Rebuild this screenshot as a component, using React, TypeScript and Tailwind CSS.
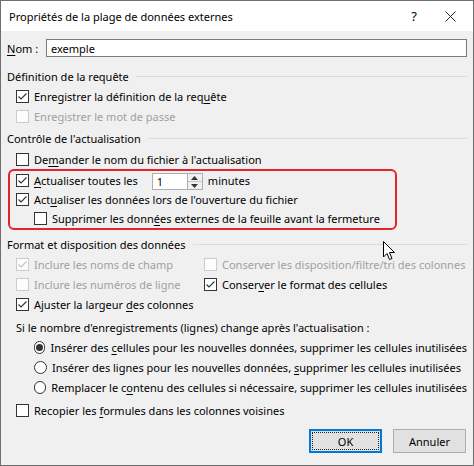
import React from 'react';

const font = { fontFamily: '"Noto Sans", "Liberation Sans", sans-serif' };

const Box: React.FC<{ checked?: boolean; disabled?: boolean }> = ({ checked, disabled }) => (
  <span
    className={`relative block w-[13px] h-[13px] shrink-0 border ${
      disabled ? 'border-[#cccccc] bg-[#fcfcfc]' : 'border-[#333333] bg-white'
    }`}
  >
    {checked && (
      <svg className="absolute left-0 top-0" width="11" height="11" viewBox="0 0 11 11">
        <path
          d="M1.5 5.5 L4 8 L9.5 2.5"
          fill="none"
          stroke={disabled ? '#c4c4c4' : '#333333'}
          strokeWidth="1.1"
        />
      </svg>
    )}
  </span>
);

const Check: React.FC<{
  label: React.ReactNode;
  checked?: boolean;
  disabled?: boolean;
  className?: string;
}> = ({ label, checked, disabled, className = '' }) => (
  <div className={`flex items-center h-5 gap-[5px] ${className}`}>
    <Box checked={checked} disabled={disabled} />
    <span className={`leading-none whitespace-nowrap ${disabled ? 'text-[#a0a0a0]' : 'text-black'}`}>{label}</span>
  </div>
);

const Radio: React.FC<{ label: React.ReactNode; checked?: boolean }> = ({ label, checked }) => (
  <div className="flex items-center h-5 gap-[5px] pl-[18px]">
    <span className="flex items-center justify-center w-[13px] h-[13px] rounded-full border border-[#333333] bg-white">
      {checked && <span className="block w-[7px] h-[7px] rounded-full bg-[#333333]" />}
    </span>
    <span className="leading-none whitespace-nowrap">{label}</span>
  </div>
);

const Group: React.FC<{ title: string; className?: string }> = ({ title, className = '' }) => (
  <div className={`flex items-center h-5 gap-[7px] ${className}`}>
    <span className="leading-none whitespace-nowrap">{title}</span>
    <span className="flex-1 h-px bg-[#dcdcdc]" />
  </div>
);

const U: React.FC<{ children: React.ReactNode }> = ({ children }) => (
  <u className="underline underline-offset-[2px]">{children}</u>
);

export default function App() {
  return (
    <div
      className="relative w-[474px] h-[466px] overflow-hidden bg-[#f0f0f0] border border-[#6f6f6f] text-[11px] text-black"
      style={font}
    >
      {/* title bar */}
      <div className="flex items-center h-[30px] bg-white pl-[8px]">
        <span className="flex-1 leading-none">Propriétés de la plage de données externes</span>
        <span className="w-[30px] text-center text-[13px] leading-none mr-[16px]">?</span>
        <svg className="mr-[17px]" width="11" height="11" viewBox="0 0 11 11">
          <path d="M0.5 0.5 L10.5 10.5 M10.5 0.5 L0.5 10.5" stroke="#222222" strokeWidth="1" />
        </svg>
      </div>

      <div className="flex flex-col px-[6px]">
        {/* name */}
        <div className="flex items-center mt-[8px] h-[18px]">
          <span className="w-[39px] leading-none">
            <U>N</U>om :
          </span>
          <div className="flex-1 h-[18px] flex items-center border border-[#7a7a7a] bg-white pl-[4px] leading-none">
            exemple
          </div>
        </div>

        <Group title="Définition de la requête" className="mt-[9px]" />
        <div className="pl-[9px]">
          <Check
            checked
            label={
              <>
                Enregistrer la définition de la req<U>u</U>ête
              </>
            }
          />
          <Check disabled label="Enregistrer le mot de passe" />
        </div>

        <Group title="Contrôle de l'actualisation" className="mt-[2px]" />
        <div className="pl-[9px] mt-px">
          <Check
            label={
              <>
                De<U>m</U>ander le nom du fichier à l'actualisation
              </>
            }
          />
        </div>

        {/* highlighted block */}
        <div className="ml-px w-[389px] border-2 border-[#e0262c] rounded-[6px] pl-[6px]">
          <div className="flex items-center h-[19px]">
            <Check
              checked
              className="h-[19px]"
              label={
                <>
                  <U>A</U>ctualiser toutes les
                </>
              }
            />
            <div className="flex ml-[14px] mt-[2px] h-[17px] w-[51px] border border-[#adadad] bg-white">
              <span className="flex-1 pl-[4px] leading-[15px]">1</span>
              <span className="flex flex-col w-[15px] border-l border-[#adadad] bg-[#f0f0f0]">
                <span className="flex-1 flex items-center justify-center border-b border-[#c8c8c8]">
                  <svg width="7" height="4" viewBox="0 0 7 4">
                    <path d="M0 4 L3.5 0 L7 4 Z" fill="#333333" />
                  </svg>
                </span>
                <span className="flex-1 flex items-center justify-center">
                  <svg width="7" height="4" viewBox="0 0 7 4">
                    <path d="M0 0 L3.5 4 L7 0 Z" fill="#333333" />
                  </svg>
                </span>
              </span>
            </div>
            <span className="ml-[5px] leading-none">minutes</span>
          </div>
          <Check
            checked
            className="h-[19px]"
            label={
              <>
                Act<U>u</U>aliser les données lors de l'ouverture du fichier
              </>
            }
          />
          <Check
            className="h-[19px] pl-[18px]"
            label={
              <>
                Supprimer les donn<U>é</U>es externes de la feuille avant la fermeture
              </>
            }
          />
        </div>

        <Group title="Format et disposition des données" className="mt-[4px]" />
        <div className="grid grid-cols-[188px_1fr] pl-[9px]">
          <Check checked disabled label="Inclure les noms de champ" />
          <Check disabled label="Conserver les disposition/filtre/tri des colonnes" />
          <Check disabled label="Inclure les numéros de ligne" />
          <Check
            checked
            label={
              <>
                Conser<U>v</U>er le format des cellules
              </>
            }
          />
          <Check
            checked
            label={
              <>
                Ajuster la largeur <U>d</U>es colonnes
              </>
            }
          />
        </div>

        <div className="pl-[9px] mt-[4px]">
          <div className="flex items-center h-[19px] leading-none">
            Si le nombre d'enregistrements (lignes) change après l'actualisation :
          </div>
          <Radio
            checked
            label={
              <>
                Insérer des <U>c</U>ellules pour les nouvelles données, supprimer les cellules inutilisées
              </>
            }
          />
          <Radio
            label={
              <>
                Insérer des lignes pour les nouvelles données, <U>s</U>upprimer les cellules inutilisées
              </>
            }
          />
          <Radio
            label={
              <>
                Remplacer le c<U>o</U>ntenu des cellules si nécessaire, supprimer les cellules inutilisées
              </>
            }
          />
          <Check
            className="mt-[3px]"
            label={
              <>
                Recopier les <U>f</U>ormules dans les colonnes voisines
              </>
            }
          />
        </div>

        {/* buttons */}
        <div className="flex justify-end gap-[11px] mt-[9px] mr-[1px]">
          <button className="w-[73px] h-[24px] border-2 border-[#0078d7] bg-[#e1e1e1] p-px">
            <span className="flex items-center justify-center w-full h-full border border-dotted border-[#222222] leading-none">
              OK
            </span>
          </button>
          <button className="w-[73px] h-[24px] border border-[#adadad] bg-[#e1e1e1] leading-none">Annuler</button>
        </div>
      </div>

      {/* mouse pointer */}
      <svg className="absolute left-[382px] top-[240px]" width="13" height="20" viewBox="0 0 13 20">
        <path
          d="M0.5 0.5 L0.5 16 L4 12.5 L6.5 18.5 L9 17.5 L6.5 11.5 L11.5 11.5 Z"
          fill="#ffffff"
          stroke="#000000"
          strokeWidth="1"
          strokeLinejoin="round"
        />
      </svg>
    </div>
  );
}
